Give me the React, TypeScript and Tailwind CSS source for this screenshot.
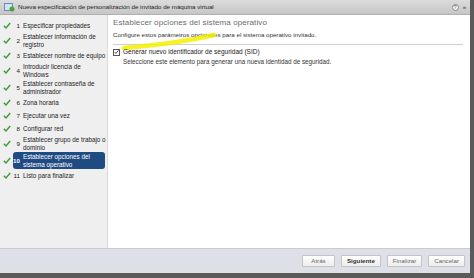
import React from "react";

const steps = [
  { n: 1, t: ["Especificar propiedades"] },
  { n: 2, t: ["Establecer información de", "registro"] },
  { n: 3, t: ["Establecer nombre de equipo"] },
  { n: 4, t: ["Introducir licencia de", "Windows"] },
  { n: 5, t: ["Establecer contraseña de", "administrador"] },
  { n: 6, t: ["Zona horaria"] },
  { n: 7, t: ["Ejecutar una vez"] },
  { n: 8, t: ["Configurar red"] },
  { n: 9, t: ["Establecer grupo de trabajo o", "dominio"] },
  { n: 10, t: ["Establecer opciones del", "sistema operativo"], active: true },
  { n: 11, t: ["Listo para finalizar"] },
];

function Check() {
  return (
    <svg width="8" height="7" viewBox="0 0 8 7" className="shrink-0">
      <path d="M0.8 3.8 L3 6 L7.2 1" fill="none" stroke="#3f9a3a" strokeWidth="1.4" />
    </svg>
  );
}

export default function App() {
  return (
    <div
      className="w-[474px] h-[278px] bg-[#5a5a5a] pr-[4px] pb-[5px] overflow-hidden"
      style={{ fontFamily: '"Liberation Sans", Arial, sans-serif' }}
    >
      <div className="h-full flex flex-col bg-white">
        {/* title bar */}
        <div className="h-[15px] flex items-center px-[4px] bg-gradient-to-b from-[#dcdcdc] to-[#c6c6c6] border-b border-[#b0b0b0]">
          <svg width="11" height="10" viewBox="0 0 11 10" className="mr-[3px]">
            <rect x="0.5" y="1.5" width="8" height="7" fill="#cfe3f5" stroke="#6a8db5" />
            <circle cx="8" cy="7" r="2.5" fill="#4aa33e" />
          </svg>
          <span className="text-[6.2px] text-[#222] whitespace-nowrap">
            Nueva especificación de personalización de invitado de máquina virtual
          </span>
          <div className="ml-auto flex items-center gap-[4px]">
            <span className="w-[7px] h-[7px] rounded-full border border-[#888] bg-[#f4f4f4] text-[5px] leading-[5px] flex items-center justify-center text-[#555]">
              ?
            </span>
            <span className="text-[6px] font-bold text-[#555] leading-none">»</span>
          </div>
        </div>

        <div className="flex-1 flex min-h-0">
          {/* sidebar */}
          <div className="w-[108px] shrink-0 bg-[#efefef] border-r border-[#dadada] pt-[4px] pl-[3px] pr-[2px] flex flex-col">
            {steps.map((s) => (
              <div
                key={s.n}
                className={`flex items-center ${s.t.length > 1 ? "h-[17px]" : "h-[13px]"}`}
              >
                <Check />
                <div
                  className={`flex items-center flex-1 ml-[2px] ${
                    s.active ? "bg-[#1f4a82] text-white rounded-[3px] py-[1px]" : "text-[#222]"
                  }`}
                >
                  <span
                    className={`text-[6.2px] w-[10px] text-right pr-[3px] shrink-0 ${
                      s.active ? "font-bold" : ""
                    }`}
                  >
                    {s.n}
                  </span>
                  <span className="text-[6.3px] leading-[7.5px] whitespace-nowrap">
                    {s.t.map((l, i) => (
                      <div key={i}>{l}</div>
                    ))}
                  </span>
                </div>
              </div>
            ))}
          </div>

          {/* content */}
          <div className="flex-1 relative pl-[5px] pr-[7px] pt-[2px]">
            <div className="text-[8px] text-[#6b6b6b] tracking-[0.1px]">
              Establecer opciones del sistema operativo
            </div>
            <div className="text-[6.2px] text-[#333] mt-[1px] pb-[5px] border-b border-[#cfcfcf]">
              Configure estos parámetros opcionales para el sistema operativo invitado.
            </div>
            <svg
              width="120"
              height="60"
              viewBox="0 0 120 60"
              className="absolute left-0 top-0 pointer-events-none"
            >
              <path
                d="M16 33 C 40 31, 72 28, 106 20"
                fill="none"
                stroke="#f5f000"
                strokeWidth="4.5"
                strokeLinecap="round"
                opacity="0.85"
              />
            </svg>
            <div className="flex items-center mt-[2px] relative">
              <span className="w-[7px] h-[7px] border border-[#555] bg-white flex items-center justify-center mr-[3px]">
                <svg width="6" height="6" viewBox="0 0 6 6">
                  <path d="M0.8 3 L2.4 4.8 L5.4 0.8" fill="none" stroke="#333" strokeWidth="1" />
                </svg>
              </span>
              <span className="text-[6.5px] text-[#222]">
                Generar nuevo identificador de seguridad (SID)
              </span>
            </div>
            <div className="text-[6.3px] text-[#333] ml-[10px]">
              Seleccione este elemento para generar una nueva identidad de seguridad.
            </div>
          </div>
        </div>

        {/* footer */}
        <div className="h-[25px] bg-[#dde1e7] border-t border-[#c8ccd2] flex items-center justify-end gap-[6px] pr-[5px]">
          {["Atrás", "Siguiente", "Finalizar", "Cancelar"].map((b) => (
            <button
              key={b}
              className={`h-[12px] px-[5px] min-w-[33px] bg-gradient-to-b from-white to-[#ececec] border border-[#c4c4c4] rounded-[1px] text-[6.2px] leading-none ${
                b === "Siguiente" ? "font-bold text-[#333]" : "text-[#666]"
              }`}
            >
              {b}
            </button>
          ))}
        </div>
      </div>
    </div>
  );
}
